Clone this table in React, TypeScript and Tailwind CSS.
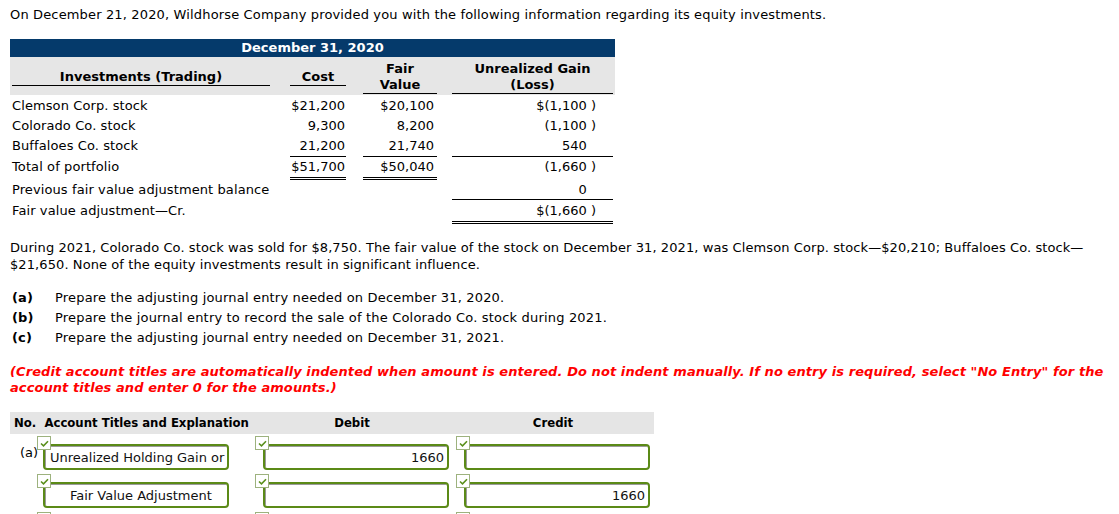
import React from "react";

const V = { fontFamily: '"DejaVu Sans", Verdana, sans-serif' };
const T = { fontFamily: '"DejaVu Sans Condensed", "DejaVu Sans", Tahoma, sans-serif' };

function Num({ v, paren }: { v: string; paren?: boolean }) {
  return (
    <span>
      {v}
      {!paren && <span className="invisible">&nbsp;)</span>}
    </span>
  );
}

type Row = {
  label: string;
  cost?: string;
  fair?: string;
  un: React.ReactNode;
  h: string;
  costB?: string;
  unB?: string;
};

function Check() {
  return (
    <div className="absolute left-0 top-0 w-[14px] h-[14px] bg-white border border-[#9db27e] flex items-center justify-center">
      <svg width="9" height="7" viewBox="0 0 9 7">
        <path d="M1 3.5 L3.5 5.8 L8 1.2" stroke="#5a8f1c" strokeWidth="1.6" fill="none" />
      </svg>
    </div>
  );
}

function Field({ text, align, indent, off }: { text?: string; align?: "right"; indent?: boolean; off: string }) {
  return (
    <div className={`relative pt-[8px] ${off}`}>
      <Check />
      <div
        className={`w-[186px] h-[26px] rounded-[4px] border-2 border-[#5b8a17] bg-white shadow-[inset_1px_1px_0_#9a9a9a] flex items-center pt-[2px] text-[13px] text-[#111] whitespace-nowrap overflow-hidden ${align === "right" ? "justify-end pr-[3px]" : indent ? "pl-[25px]" : "pl-[5px]"}`}
        style={V}
      >
        {text}
      </div>
    </div>
  );
}

export default function App() {
  return (
    <div className="bg-white w-[1119px] h-[514px] overflow-hidden text-[13px] text-black pl-[10px] pt-[7px] tracking-[0.15px]" style={V}>
      <p className="leading-[16px] whitespace-nowrap">
        On December 21, 2020, Wildhorse Company provided you with the following information regarding its equity investments.
      </p>

      <div className="mt-[16px] w-[605px] tracking-normal">
        <div className="h-[18px] bg-[#053a6b] text-white font-bold text-center leading-[18px]">December 31, 2020</div>
        <div className="h-[38px] bg-[#e6e6e6] flex items-center pl-[2px] pt-[2px] font-bold leading-[16px]">
          <div className="w-[258px] text-center border-b border-black">Investments (Trading)</div>
          <div className="ml-[20px] w-[56px] text-center border-b border-black">Cost</div>
          <div className="ml-[17px] w-[74px] text-center border-b border-black">Fair<br />Value</div>
          <div className="ml-[15px] w-[161px] text-center border-b border-black">Unrealized Gain<br />(Loss)</div>
        </div>
        <div className="pt-[1px]">
          {(
            [
              { label: "Clemson Corp. stock", cost: "$21,200", fair: "$20,100", un: <Num v="$(1,100 )" paren />, h: "leading-[20px]" },
              { label: "Colorado Co. stock", cost: "9,300", fair: "8,200", un: <Num v="(1,100 )" paren />, h: "leading-[20px]" },
              { label: "Buffaloes Co. stock", cost: "21,200", fair: "21,740", un: <Num v="540" />, h: "leading-[20px]", costB: "border-b border-black", unB: "border-b border-black" },
              { label: "Total of portfolio", cost: "$51,700", fair: "$50,040", un: <Num v="(1,660 )" paren />, h: "leading-[20px]", costB: "border-b-[3px] border-double border-black" },
              { label: "Previous fair value adjustment balance", un: <Num v="0" />, h: "leading-[19px]", unB: "border-b border-black" },
              { label: "Fair value adjustment\u2014Cr.", un: <Num v="$(1,660 )" paren />, h: "leading-[21px]", unB: "border-b-[3px] border-double border-black" },
            ] as Row[]
          ).map((r, i) => (
            <div key={i} className={`flex items-start pl-[2px] ${r.h}`}>
              <div className="w-[258px] whitespace-nowrap tracking-[0.1px]">{r.label}</div>
              <div className={`ml-[20px] w-[56px] text-right pr-[1px] ${r.costB ?? ""}`}>{r.cost ?? "\u00a0"}</div>
              <div className={`ml-[17px] w-[74px] text-right pr-[3px] ${r.costB ?? ""}`}>{r.fair ?? "\u00a0"}</div>
              <div className={`ml-[15px] w-[161px] text-right pr-[17px] ${r.unB ?? ""}`}>{r.un}</div>
            </div>
          ))}
        </div>
      </div>

      <p className="mt-[15px] leading-[17px] whitespace-nowrap tracking-[0.09px]">
        {"During 2021, Colorado Co. stock was sold for $8,750. The fair value of the stock on December 31, 2021, was Clemson Corp. stock\u2014$20,210; Buffaloes Co. stock\u2014"}
        <br />
        $21,650. None of the equity investments result in significant influence.
      </p>

      <div className="mt-[15px] leading-[20px] tracking-[0.18px]">
        {[
          ["(a)", "Prepare the adjusting journal entry needed on December 31, 2020."],
          ["(b)", "Prepare the journal entry to record the sale of the Colorado Co. stock during 2021."],
          ["(c)", "Prepare the adjusting journal entry needed on December 31, 2021."],
        ].map(([a, b]) => (
          <div key={a} className="flex">
            <div className="w-[45px] pl-[2px] font-bold">{a}</div>
            <div>{b}</div>
          </div>
        ))}
      </div>

      <p className="mt-[16px] leading-[16px] text-[#f00] font-bold italic whitespace-nowrap tracking-[0.08px]">
        (Credit account titles are automatically indented when amount is entered. Do not indent manually. If no entry is required, select "No Entry" for the
        <br />
        account titles and enter 0 for the amounts.)
      </p>

      <div className="mt-[16px] w-[644px] tracking-normal">
        <div className="h-[22px] bg-[#e5e5e5] flex items-center font-bold leading-[22px]" style={T}>
          <div className="w-[253px] pl-[4px]">No.&nbsp; Account Titles and Explanation</div>
          <div className="w-[178px] text-center">Debit</div>
          <div className="w-[213px] pl-[11px] text-center">Credit</div>
        </div>
        <div className="pt-[2px]">
          <div className="flex items-start h-[38px]">
            <div className="w-[27px] pl-[10px] pt-[9px] text-[13px] leading-[16px]">(a)</div>
            <Field text="Unrealized Holding Gain or" off="pl-[6px]" />
            <Field text="1660" align="right" off="ml-[26px] pl-[8px]" />
            <Field off="ml-[7px] pl-[8px]" />
          </div>
          <div className="flex items-start h-[38px]">
            <div className="w-[27px]" />
            <Field text="Fair Value Adjustment" indent off="pl-[6px]" />
            <Field off="ml-[26px] pl-[8px]" />
            <Field text="1660" align="right" off="ml-[7px] pl-[8px]" />
          </div>
          <div className="flex items-start h-[38px]">
            <div className="w-[27px]" />
            <Field off="pl-[6px]" />
            <Field off="ml-[26px] pl-[8px]" />
            <Field off="ml-[7px] pl-[8px]" />
          </div>
        </div>
      </div>
    </div>
  );
}
